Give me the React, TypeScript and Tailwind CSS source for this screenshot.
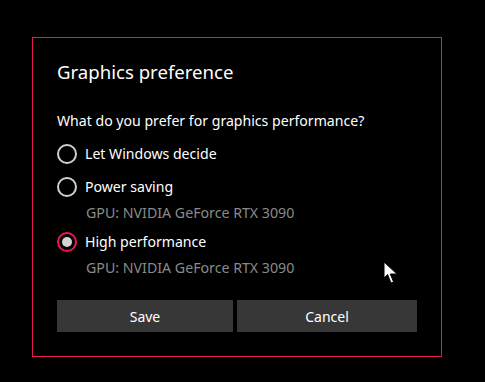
import { useState } from "react";

const options = [
  { id: "auto", label: "Let Windows decide", gpu: "" },
  { id: "power", label: "Power saving", gpu: "GPU: NVIDIA GeForce RTX 3090" },
  { id: "high", label: "High performance", gpu: "GPU: NVIDIA GeForce RTX 3090" },
];

function Radio({ checked }: { checked: boolean }) {
  return (
    <span
      className={
        checked
          ? "w-[20px] h-[20px] rounded-full border-2 border-[#e8175d] flex items-center justify-center shrink-0"
          : "w-[20px] h-[20px] rounded-full border-2 border-[#cfcfcf] flex items-center justify-center shrink-0"
      }
    >
      {checked && <span className="w-[10px] h-[10px] rounded-full bg-[#d4d4d4]" />}
    </span>
  );
}

export default function App() {
  const [choice, setChoice] = useState("high");

  return (
    <div
      className="relative w-[485px] h-[382px] bg-black pt-[37px] pl-[32px] text-white overflow-hidden"
      style={{ fontFamily: '"Noto Sans", "Open Sans", sans-serif' }}
    >
      <div className="w-[410px] h-[320px] border border-[#e8175d] px-[24px] pt-[20px]">
        <h1 className="text-[18.6px] leading-[28px] font-normal">Graphics preference</h1>
        <p className="mt-[25px] text-[14.1px] leading-[20px]">
          What do you prefer for graphics performance?
        </p>

        {options.map((o, i) => (
          <div key={o.id} className={i === 2 ? "mt-[9px]" : "mt-[13px]"}>
            <button
              onClick={() => setChoice(o.id)}
              className="flex items-center gap-[8px] h-[20px] text-[14.1px] leading-[20px]"
            >
              <Radio checked={choice === o.id} />
              <span>{o.label}</span>
            </button>
            {o.gpu && (
              <div className="mt-[6px] pl-[29px] text-[14.2px] leading-[20px] text-[#8a8a8a]">{o.gpu}</div>
            )}
          </div>
        ))}

        <div className="mt-[22px] flex gap-[4px]">
          <button className="w-[176px] h-[32px] bg-[#373737] text-[14px]">Save</button>
          <button className="w-[180px] h-[32px] bg-[#373737] text-[14px]">Cancel</button>
        </div>
      </div>

      {/* mouse pointer */}
      <svg
        className="absolute left-[383px] top-[261px]"
        width="16"
        height="25"
        viewBox="0 0 16 25"
      >
        <path
          d="M1 1 L1 17 L4.6 13.6 L8 22 L10.6 21 L7.3 13 L14 13 Z"
          fill="#fff"
          stroke="#000"
          strokeWidth="1"
        />
      </svg>
    </div>
  );
}
